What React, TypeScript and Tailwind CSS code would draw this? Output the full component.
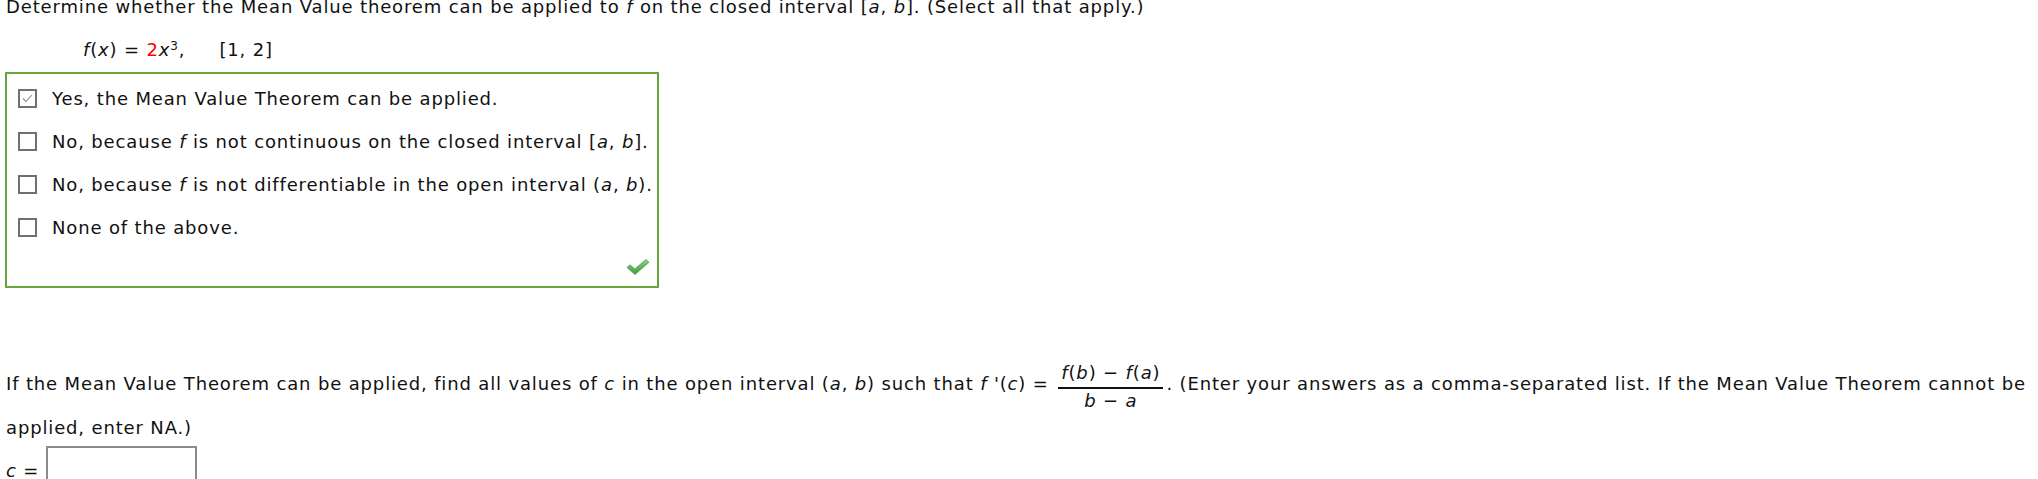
import React from 'react';

const Checkbox: React.FC<{ checked?: boolean }> = ({ checked }) => (
  <span className="relative inline-block w-[19px] h-[19px] border-2 border-[#707070] bg-white shrink-0">
    {checked && (
      <svg viewBox="0 0 15 15" className="absolute inset-0 w-[15px] h-[15px]">
        <path d="M3 7.5 L6 10.5 L12 4" fill="none" stroke="#7a8aa0" strokeWidth="1.1" />
      </svg>
    )}
  </span>
);

const options: { checked: boolean; text: React.ReactNode }[] = [
  { checked: true, text: <>Yes, the Mean Value Theorem can be applied.</> },
  {
    checked: false,
    text: (
      <>
        No, because <i>f</i> is not continuous on the closed interval [<i>a</i>, <i>b</i>].
      </>
    ),
  },
  {
    checked: false,
    text: (
      <>
        No, because <i>f</i> is not differentiable in the open interval (<i>a</i>, <i>b</i>).
      </>
    ),
  },
  { checked: false, text: <>None of the above.</> },
];

const App: React.FC = () => {
  return (
    <div className="w-[2038px] h-[479px] overflow-hidden bg-white text-[#111] text-[18px] tracking-[0.85px] font-['DejaVu_Sans',Verdana,sans-serif]">
      <div className="pl-[6px]">
        <p className="leading-[20px] -mt-[3px] whitespace-nowrap">
          Determine whether the Mean Value theorem can be applied to <i>f</i> on the closed interval [<i>a</i>, <i>b</i>]. (Select all that apply.)
        </p>
        <p className="leading-[20px] mt-[23px] pl-[77px] whitespace-nowrap">
          <i>f</i>(<i>x</i>) = <span className="text-[#ff0000]">2</span>
          <i>x</i>
          <span className="text-[12px] leading-none align-[6px]">3</span>,
          <span className="ml-[34px]">[1, 2]</span>
        </p>
      </div>

      <div className="ml-[5px] mt-[12px] w-[654px] h-[216px] border-2 border-[#69a53c] flex flex-col pt-[3px]">
        {options.map((o, i) => (
          <div key={i} className="h-[43px] flex items-center pl-[11px] gap-[15px] whitespace-nowrap">
            <Checkbox checked={o.checked} />
            <span className="leading-[20px]">{o.text}</span>
          </div>
        ))}
        <div className="flex-1 flex items-end justify-end pr-[7px] pb-[10px]">
          <svg viewBox="0 0 24 18" className="w-[24px] h-[18px]">
            <defs>
              <linearGradient id="ok" x1="0" y1="0" x2="0" y2="1">
                <stop offset="0" stopColor="#8fd18a" />
                <stop offset="1" stopColor="#3e9a3e" />
              </linearGradient>
            </defs>
            <path
              d="M1 9.5 L4 6.8 L8.8 11 L20 1.5 L23 4.3 L9 16.5 Z"
              fill="url(#ok)"
              stroke="#4a9f48"
              strokeWidth="0.8"
              strokeLinejoin="round"
            />
          </svg>
        </div>
      </div>

      <div className="pl-[6px] mt-[76px]">
        <p className="leading-[20px] whitespace-nowrap">
          If the Mean Value Theorem can be applied, find all values of <i>c</i> in the open interval (<i>a</i>, <i>b</i>) such that <i>f</i> '(<i>c</i>) ={' '}
          <span className="inline-flex flex-col items-center align-[11px] mx-[3px]">
            <span className="leading-[18px] px-[3px]">
              <i>f</i>(<i>b</i>) − <i>f</i>(<i>a</i>)
            </span>
            <span className="block w-full h-[2px] bg-[#111] mt-[5px] mb-[3px]" />
            <span className="leading-[18px]">
              <i>b</i> − <i>a</i>
            </span>
          </span>
          . (Enter your answers as a comma-separated list. If the Mean Value Theorem cannot be
        </p>
        <p className="leading-[20px] mt-[8px]">applied, enter NA.)</p>
        <div className="flex items-end mt-[8px]">
          <span className="leading-[20px] mb-[3px]">
            <i>c</i> =
          </span>
          <span className="ml-[7px] w-[151px] h-[38px] border-2 border-[#8c8c8c] bg-white" />
        </div>
      </div>
    </div>
  );
};

export default App;
